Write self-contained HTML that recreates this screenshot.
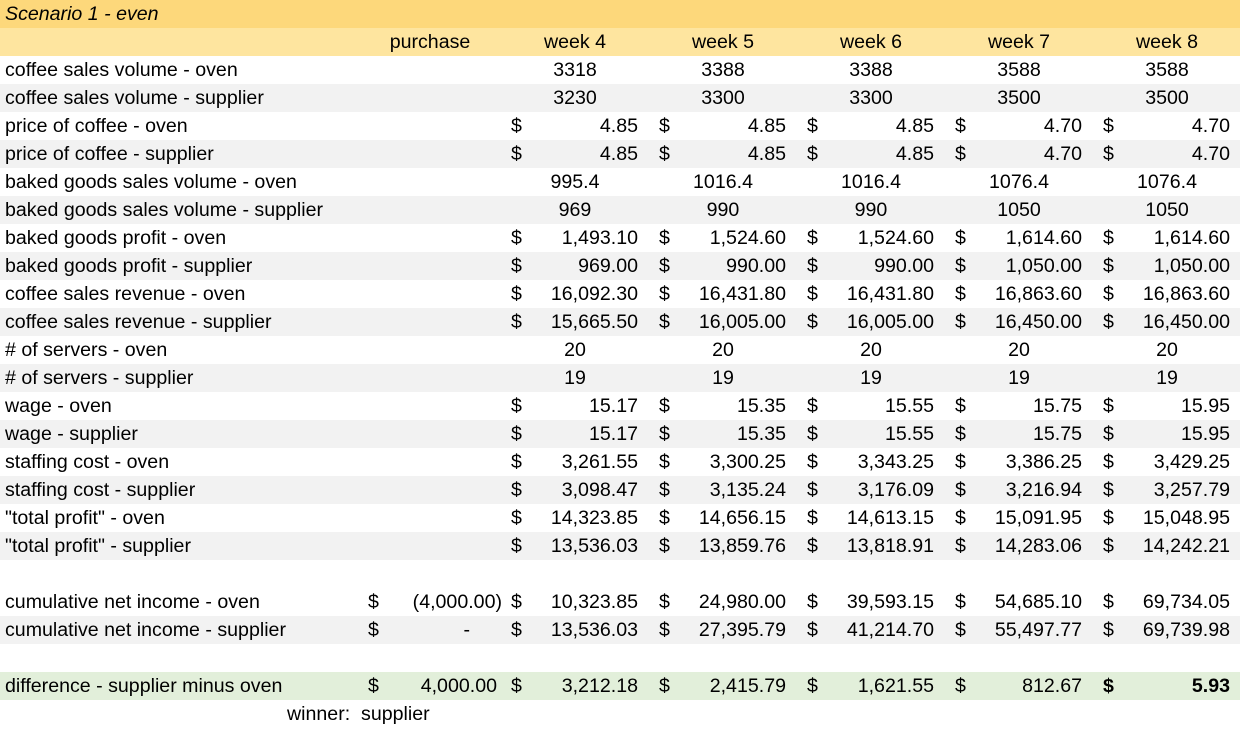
<!DOCTYPE html><html><head><meta charset="utf-8"><style>
body{margin:0;width:1248px;height:740px;background:#fff;font-family:"Liberation Sans",sans-serif;font-size:19.6px;color:#000;overflow:hidden}
.r{position:relative;height:28px;line-height:29px;white-space:nowrap;width:1240px}
.g{background:#f2f2f2}.t{background:#fdd87b}.h{background:#fee59f}.gr{background:#e2efda}
.r span{position:absolute;top:0}
.l{left:5px}
.d0{left:368px}.d1{left:511px}.d2{left:659px}.d3{left:807px}.d4{left:955px}.d5{left:1103px}
.v0,.v1,.v2,.v3,.v4,.v5{text-align:right;width:200px}
.v0{left:297px}.v1{left:438px}.v2{left:586px}.v3{left:734px}.v4{left:882px}.v5{left:1030px}
.c0,.c1,.c2,.c3,.c4,.c5{text-align:center;width:140px}
.c0{left:360px}.c1{left:505px}.c2{left:653px}.c3{left:801px}.c4{left:949px}.c5{left:1097px}
</style></head><body>
<div class="r t"><span class="l" style="font-style:italic">Scenario 1 - even</span></div>
<div class="r h"><span class="c0">purchase</span><span class="c1">week 4</span><span class="c2">week 5</span><span class="c3">week 6</span><span class="c4">week 7</span><span class="c5">week 8</span></div>
<div class="r"><span class="l">coffee sales volume - oven</span><span class="c1">3318</span><span class="c2">3388</span><span class="c3">3388</span><span class="c4">3588</span><span class="c5">3588</span></div>
<div class="r g"><span class="l">coffee sales volume - supplier</span><span class="c1">3230</span><span class="c2">3300</span><span class="c3">3300</span><span class="c4">3500</span><span class="c5">3500</span></div>
<div class="r"><span class="l">price of coffee - oven</span><span class="d1">$</span><span class="v1">4.85</span><span class="d2">$</span><span class="v2">4.85</span><span class="d3">$</span><span class="v3">4.85</span><span class="d4">$</span><span class="v4">4.70</span><span class="d5">$</span><span class="v5">4.70</span></div>
<div class="r g"><span class="l">price of coffee - supplier</span><span class="d1">$</span><span class="v1">4.85</span><span class="d2">$</span><span class="v2">4.85</span><span class="d3">$</span><span class="v3">4.85</span><span class="d4">$</span><span class="v4">4.70</span><span class="d5">$</span><span class="v5">4.70</span></div>
<div class="r"><span class="l">baked goods sales volume - oven</span><span class="c1">995.4</span><span class="c2">1016.4</span><span class="c3">1016.4</span><span class="c4">1076.4</span><span class="c5">1076.4</span></div>
<div class="r g"><span class="l">baked goods sales volume - supplier</span><span class="c1">969</span><span class="c2">990</span><span class="c3">990</span><span class="c4">1050</span><span class="c5">1050</span></div>
<div class="r"><span class="l">baked goods profit - oven</span><span class="d1">$</span><span class="v1">1,493.10</span><span class="d2">$</span><span class="v2">1,524.60</span><span class="d3">$</span><span class="v3">1,524.60</span><span class="d4">$</span><span class="v4">1,614.60</span><span class="d5">$</span><span class="v5">1,614.60</span></div>
<div class="r g"><span class="l">baked goods profit - supplier</span><span class="d1">$</span><span class="v1">969.00</span><span class="d2">$</span><span class="v2">990.00</span><span class="d3">$</span><span class="v3">990.00</span><span class="d4">$</span><span class="v4">1,050.00</span><span class="d5">$</span><span class="v5">1,050.00</span></div>
<div class="r"><span class="l">coffee sales revenue - oven</span><span class="d1">$</span><span class="v1">16,092.30</span><span class="d2">$</span><span class="v2">16,431.80</span><span class="d3">$</span><span class="v3">16,431.80</span><span class="d4">$</span><span class="v4">16,863.60</span><span class="d5">$</span><span class="v5">16,863.60</span></div>
<div class="r g"><span class="l">coffee sales revenue - supplier</span><span class="d1">$</span><span class="v1">15,665.50</span><span class="d2">$</span><span class="v2">16,005.00</span><span class="d3">$</span><span class="v3">16,005.00</span><span class="d4">$</span><span class="v4">16,450.00</span><span class="d5">$</span><span class="v5">16,450.00</span></div>
<div class="r"><span class="l"># of servers - oven</span><span class="c1">20</span><span class="c2">20</span><span class="c3">20</span><span class="c4">20</span><span class="c5">20</span></div>
<div class="r g"><span class="l"># of servers - supplier</span><span class="c1">19</span><span class="c2">19</span><span class="c3">19</span><span class="c4">19</span><span class="c5">19</span></div>
<div class="r"><span class="l">wage - oven</span><span class="d1">$</span><span class="v1">15.17</span><span class="d2">$</span><span class="v2">15.35</span><span class="d3">$</span><span class="v3">15.55</span><span class="d4">$</span><span class="v4">15.75</span><span class="d5">$</span><span class="v5">15.95</span></div>
<div class="r g"><span class="l">wage - supplier</span><span class="d1">$</span><span class="v1">15.17</span><span class="d2">$</span><span class="v2">15.35</span><span class="d3">$</span><span class="v3">15.55</span><span class="d4">$</span><span class="v4">15.75</span><span class="d5">$</span><span class="v5">15.95</span></div>
<div class="r"><span class="l">staffing cost - oven</span><span class="d1">$</span><span class="v1">3,261.55</span><span class="d2">$</span><span class="v2">3,300.25</span><span class="d3">$</span><span class="v3">3,343.25</span><span class="d4">$</span><span class="v4">3,386.25</span><span class="d5">$</span><span class="v5">3,429.25</span></div>
<div class="r g"><span class="l">staffing cost - supplier</span><span class="d1">$</span><span class="v1">3,098.47</span><span class="d2">$</span><span class="v2">3,135.24</span><span class="d3">$</span><span class="v3">3,176.09</span><span class="d4">$</span><span class="v4">3,216.94</span><span class="d5">$</span><span class="v5">3,257.79</span></div>
<div class="r"><span class="l">"total profit" - oven</span><span class="d1">$</span><span class="v1">14,323.85</span><span class="d2">$</span><span class="v2">14,656.15</span><span class="d3">$</span><span class="v3">14,613.15</span><span class="d4">$</span><span class="v4">15,091.95</span><span class="d5">$</span><span class="v5">15,048.95</span></div>
<div class="r g"><span class="l">"total profit" - supplier</span><span class="d1">$</span><span class="v1">13,536.03</span><span class="d2">$</span><span class="v2">13,859.76</span><span class="d3">$</span><span class="v3">13,818.91</span><span class="d4">$</span><span class="v4">14,283.06</span><span class="d5">$</span><span class="v5">14,242.21</span></div>
<div class="r"></div>
<div class="r"><span class="l">cumulative net income - oven</span><span class="d0">$</span><span class="v0" style="left:302px">(4,000.00)</span><span class="d1">$</span><span class="v1">10,323.85</span><span class="d2">$</span><span class="v2">24,980.00</span><span class="d3">$</span><span class="v3">39,593.15</span><span class="d4">$</span><span class="v4">54,685.10</span><span class="d5">$</span><span class="v5">69,734.05</span></div>
<div class="r g"><span class="l">cumulative net income - supplier</span><span class="d0">$</span><span class="v0" style="left:270px">-</span><span class="d1">$</span><span class="v1">13,536.03</span><span class="d2">$</span><span class="v2">27,395.79</span><span class="d3">$</span><span class="v3">41,214.70</span><span class="d4">$</span><span class="v4">55,497.77</span><span class="d5">$</span><span class="v5">69,739.98</span></div>
<div class="r"></div>
<div class="r gr"><span class="l">difference - supplier minus oven</span><span class="d0">$</span><span class="v0">4,000.00</span><span class="d1">$</span><span class="v1">3,212.18</span><span class="d2">$</span><span class="v2">2,415.79</span><span class="d3">$</span><span class="v3">1,621.55</span><span class="d4">$</span><span class="v4">812.67</span><span class="d5" style="font-weight:bold">$</span><span class="v5" style="font-weight:bold">5.93</span></div>
<div class="r"><span style="left:287px">winner:&nbsp; supplier</span></div>
</body></html>
